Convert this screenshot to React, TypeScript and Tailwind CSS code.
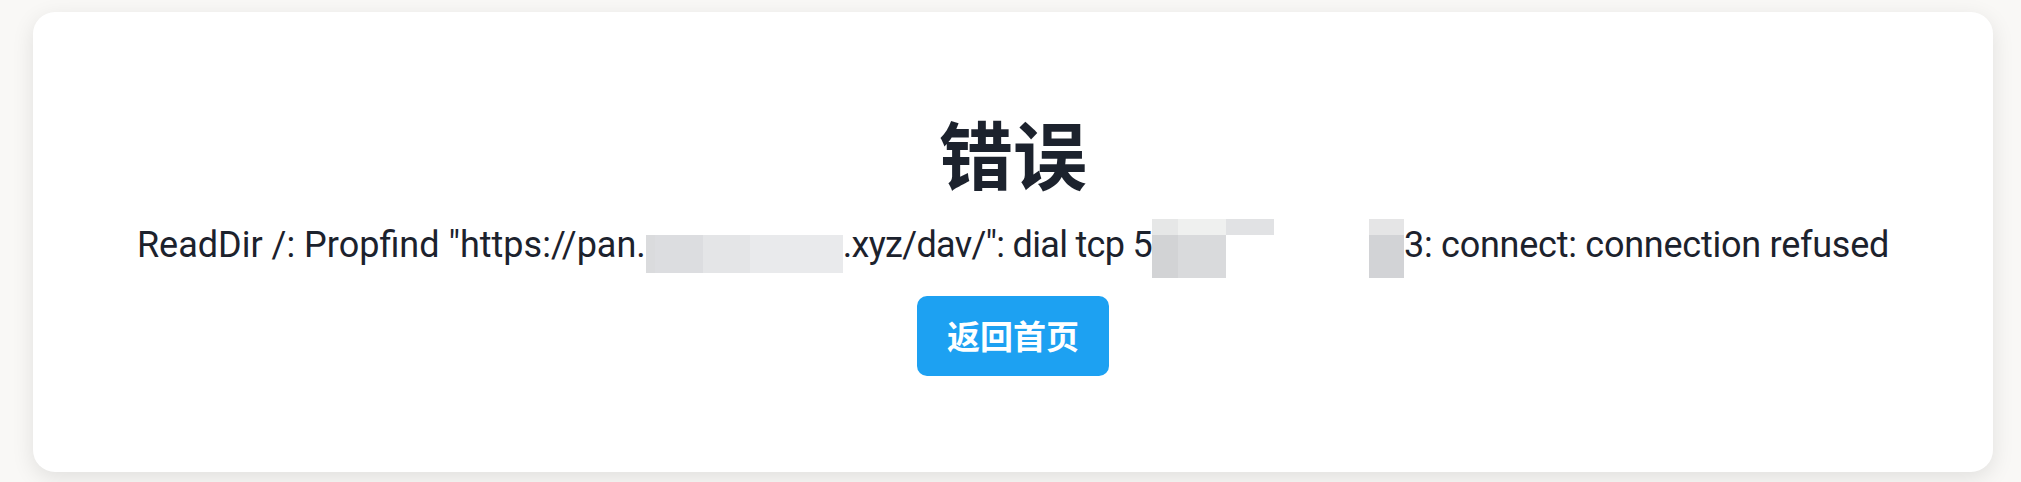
import React from "react";

export default function App() {
  return (
    <div className="min-h-screen w-full bg-[#f9f8f6] pl-[33px] pr-[28px] pt-[12px] pb-[10px]">
      <div className="flex h-[460px] flex-col items-center rounded-[22px] bg-white pt-[103px] shadow-[0_6px_22px_rgba(0,0,0,0.10)]">
        <h1 className="font-['Noto_Sans_CJK_SC',sans-serif] text-[74px] font-bold leading-[74px] text-[#1c222d]">
          错误
        </h1>
        <p className="mt-[32px] h-[48px] whitespace-nowrap font-['Roboto','Noto_Sans',sans-serif] text-[36px] leading-[48px] tracking-[-0.25px] text-[#1c222d]">
          <span className="tracking-[0px]">ReadDir /: Propfind "https://pan.</span>
          <span className="relative inline-block h-0 w-[197px]">
            <span className="absolute bottom-[-16px] left-0 flex h-[38px] w-[197px]">
              <span className="h-full w-[9px] bg-[#dadbdd]" />
              <span className="h-full w-[48px] bg-[#dcdde0]" />
              <span className="h-full w-[47px] bg-[#e4e5e7]" />
              <span className="h-full w-[93px] bg-[#e9eaec]" />
            </span>
          </span>
          <span className="tracking-[-0.7px]">.xyz/dav/": dial tcp 5</span>
          <span className="relative inline-block h-0 w-[252px]">
            <span className="absolute bottom-[-21px] left-0 flex h-[59px] w-[252px] flex-col">
              <span className="flex h-[16px]">
                <span className="w-[26px] bg-[#e6e7e7]" />
                <span className="w-[48px] bg-[#eff0ef]" />
                <span className="w-[48px] bg-[#e1e2e4]" />
                <span className="w-[95px]" />
                <span className="w-[35px] bg-[#e5e5e6]" />
              </span>
              <span className="flex h-[43px]">
                <span className="w-[26px] bg-[#d2d3d5]" />
                <span className="w-[48px] bg-[#d9dadc]" />
                <span className="w-[143px]" />
                <span className="w-[35px] bg-[#d2d3d6]" />
              </span>
            </span>
          </span>
          <span>3: connect: connection refused</span>
        </p>
        <button className="mt-[27px] flex h-[80px] w-[192px] items-center justify-center rounded-[10px] bg-[#1da1f2] font-['Noto_Sans_CJK_SC',sans-serif] text-[33px] font-bold text-white">
          返回首页
        </button>
      </div>
    </div>
  );
}
